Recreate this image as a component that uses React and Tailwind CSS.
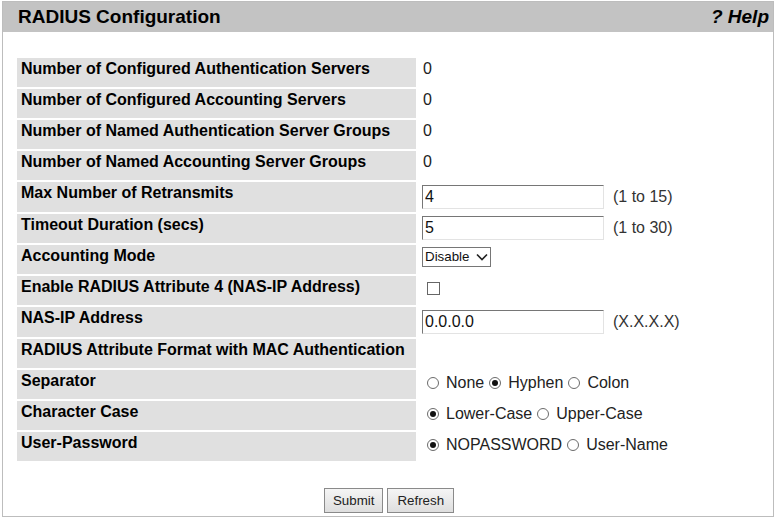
import { useState } from "react";

const rows = [
  { label: "Number of Configured Authentication Servers", type: "text", value: "0" },
  { label: "Number of Configured Accounting Servers", type: "text", value: "0" },
  { label: "Number of Named Authentication Server Groups", type: "text", value: "0" },
  { label: "Number of Named Accounting Server Groups", type: "text", value: "0" },
  { label: "Max Number of Retransmits", type: "input", value: "4", hint: "(1 to 15)", tall: true },
  { label: "Timeout Duration (secs)", type: "input", value: "5", hint: "(1 to 30)" },
  { label: "Accounting Mode", type: "select" },
  { label: "Enable RADIUS Attribute 4 (NAS-IP Address)", type: "checkbox" },
  { label: "NAS-IP Address", type: "input", value: "0.0.0.0", hint: "(X.X.X.X)", tall: true },
  { label: "RADIUS Attribute Format with MAC Authentication", type: "empty" },
  { label: "Separator", type: "radio", options: ["None", "Hyphen", "Colon"], selected: 1 },
  { label: "Character Case", type: "radio", options: ["Lower-Case", "Upper-Case"], selected: 0 },
  { label: "User-Password", type: "radio", options: ["NOPASSWORD", "User-Name"], selected: 0 },
];

function Radio({ checked }) {
  return (
    <span className="w-[12px] h-[12px] rounded-full border border-[#6b6b6b] bg-white flex items-center justify-center shrink-0">
      {checked && <span className="w-[6px] h-[6px] rounded-full bg-[#111]" />}
    </span>
  );
}

function ValueCell({ row, state, setState }) {
  if (row.type === "text") {
    return <div className="pl-[5px] pt-[2px] leading-[18px] text-[#222]">{row.value}</div>;
  }
  if (row.type === "input") {
    return (
      <div className="h-full flex items-center pl-[4px] pb-[1px]">
        <input
          defaultValue={row.value}
          className="w-[182px] h-[24px] px-[2px] text-[16px] text-[#111] bg-white border-t border-l border-t-[#767676] border-l-[#767676] border-b border-r border-b-[#e3e3e3] border-r-[#e3e3e3] outline-none"
        />
        <span className="ml-[9px] text-[#333]">{row.hint}</span>
      </div>
    );
  }
  if (row.type === "select") {
    return (
      <div className="h-full flex items-center pl-[4px] pb-[6px]">
        <div className="w-[69px] h-[20px] border border-[#767676] bg-white flex items-center justify-between pl-[2px] pr-[2px] text-[13.33px] text-[#111]">
          <span>Disable</span>
          <svg width="12" height="8" viewBox="0 0 12 8">
            <path d="M1 1.5 L6 6.5 L11 1.5" fill="none" stroke="#222" strokeWidth="1.6" />
          </svg>
        </div>
      </div>
    );
  }
  if (row.type === "checkbox") {
    return (
      <div className="h-full flex items-center pl-[9px] pb-[5px]">
        <span className="w-[13px] h-[13px] border border-[#666] bg-white" />
      </div>
    );
  }
  if (row.type === "radio") {
    const sel = state[row.label] ?? row.selected;
    return (
      <div className="h-full flex items-center pl-[9px] pb-[4px] text-[#222]">
        {row.options.map((opt, i) => (
          <label
            key={opt}
            onClick={() => setState({ ...state, [row.label]: i })}
            className={`flex items-center cursor-pointer ${i > 0 ? "ml-[5px]" : ""}`}
          >
            <Radio checked={sel === i} />
            <span className="ml-[7px]">{opt}</span>
          </label>
        ))}
      </div>
    );
  }
  return <div />;
}

export default function App() {
  const [state, setState] = useState({});

  return (
    <div className="w-[776px] h-[520px] bg-white font-['Liberation_Sans',Arial,sans-serif] text-[16px] text-black">
      <div className="ml-[2px] mt-[1px] w-[772px] h-[516px] border border-[#bdbdbd] flex flex-col">
        {/* Header */}
        <div className="h-[30px] bg-[#c3c3c3] flex items-center justify-between pl-[15px] pr-[4px] pt-[1px] shrink-0">
          <h1 className="text-[19px] font-bold">RADIUS Configuration</h1>
          <span className="text-[19px] font-bold italic">? Help</span>
        </div>

        {/* Rows */}
        <div className="mt-[26px] ml-[14px] flex flex-col gap-[2px]">
          {rows.map((row) => (
            <div key={row.label} className={`flex gap-[2px] ${row.tall ? "h-[30px]" : "h-[29px]"}`}>
              <div className="w-[399px] bg-[#e0e0e0] pl-[4px] pt-[2px] leading-[18px] font-bold">
                {row.label}
              </div>
              <div className="flex-1">
                <ValueCell row={row} state={state} setState={setState} />
              </div>
            </div>
          ))}
        </div>

        {/* Buttons */}
        <div className="mt-[27px] flex justify-center gap-[4px] pl-[2px]">
          <button className="h-[25px] px-[8px] text-[13.33px] text-[#222] border border-[#8a8a8a] bg-gradient-to-b from-[#f5f5f5] to-[#dedede]">
            Submit
          </button>
          <button className="h-[25px] px-[9px] text-[13.33px] text-[#222] border border-[#8a8a8a] bg-gradient-to-b from-[#f5f5f5] to-[#dedede]">
            Refresh
          </button>
        </div>
      </div>
    </div>
  );
}
